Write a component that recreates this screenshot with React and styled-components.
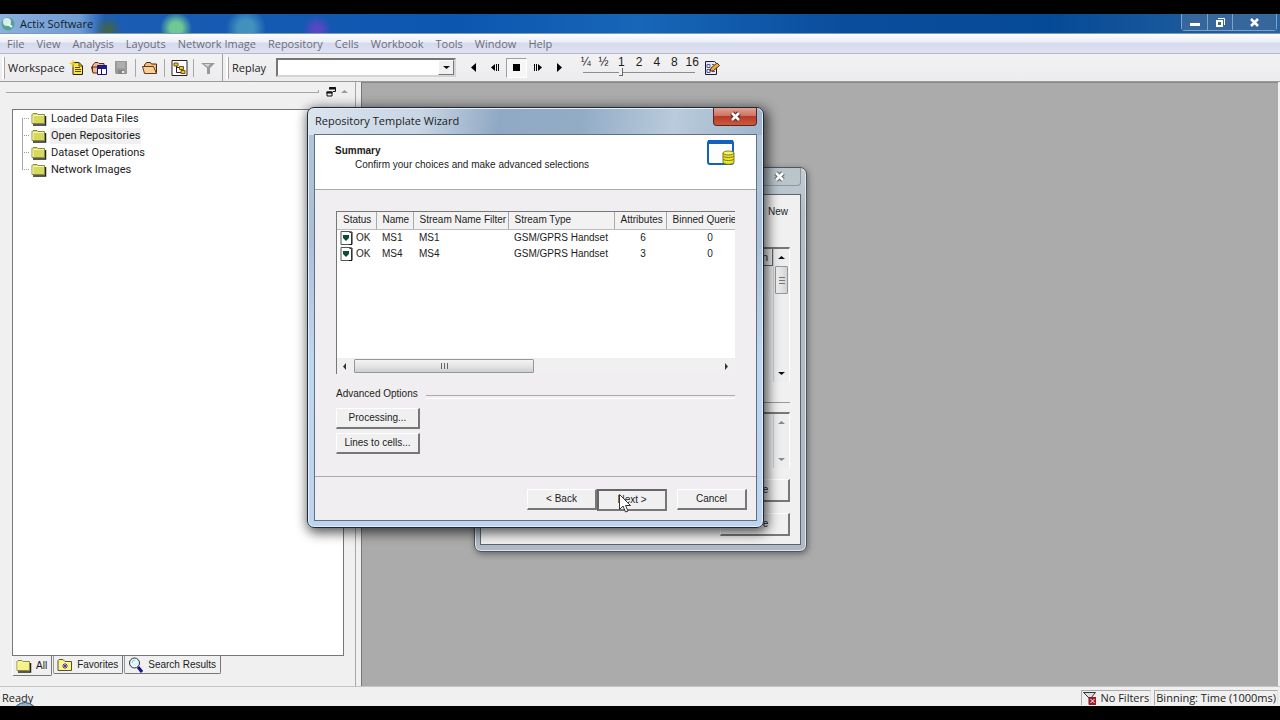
import React from 'react';
import styled, { createGlobalStyle } from 'styled-components';

const UI = '"Open Sans", "Noto Sans", sans-serif';
const CLASSIC = '"Liberation Sans", Arial, sans-serif';

const MENU = ['File', 'View', 'Analysis', 'Layouts', 'Network Image', 'Repository', 'Cells', 'Workbook', 'Tools', 'Window', 'Help'];
const TREE = ['Loaded Data Files', 'Open Repositories', 'Dataset Operations', 'Network Images'];
const SPEEDS = ['¼', '½', '1', '2', '4', '8', '16'];
const STREAMS = [
  { name: 'MS1', filter: 'MS1', type: 'GSM/GPRS Handset', attributes: 6, binned: 0 },
  { name: 'MS4', filter: 'MS4', type: 'GSM/GPRS Handset', attributes: 3, binned: 0 },
];

const Folder = ({ fill = '#d6da5c' }) => (
  <svg width="16" height="14" viewBox="0 0 16 14">
    <path d="M2 13h12.500V4" fill="none" stroke="#222" strokeWidth="1.500" />
    <path d="M1 11.500V2.500l1-1h4l1 1h6.500v9z" fill={fill} stroke="#8c8a3c" />
    <path d="M2 11V3.500h11" fill="none" stroke="#f5f5b4" />
  </svg>
);

const FavFolder = () => (
  <svg width="16" height="14" viewBox="0 0 16 14">
    <path d="M1 12.500V2.500l1-1h4l2 2h6.500v9z" fill="#fbf58c" stroke="#55532a" />
    <path d="M8 5v6M5 8h6M6 6l4 4M10 6l-4 4" stroke="#4b3a9c" />
  </svg>
);

const SearchIcon = () => (
  <svg width="16" height="16" viewBox="0 0 16 16">
    <path d="M10 10l4 5" stroke="#14148c" strokeWidth="3" />
    <circle cx="6.500" cy="6" r="5" fill="#e4f6fa" stroke="#333" />
    <path d="M4 6a3 3 0 0 1 3-3" fill="none" stroke="#7fd0dc" />
  </svg>
);

const NewIcon = () => (
  <svg width="16" height="16" viewBox="0 0 16 16">
    <path d="M4 2.500h6l3.500 3.500v8.500H4z" fill="#fbe54a" stroke="#222" />
    <path d="M10 2.500V6h3.500M6 7.500h5M6 9.500h6M6 11.500h6" fill="none" stroke="#5b4b10" />
    <path d="M4 0v7M0.500 3.500h7M2 1.500l4 4M6 1.500l-4 4" stroke="#f2c81c" />
  </svg>
);

const OpenWsIcon = () => (
  <svg width="17" height="16" viewBox="0 0 17 16">
    <path d="M1.500 12V5.500L4 2.500h3l1 1h5v3M0.500 7h6v6H2z" fill="#f6b989" stroke="#5e2b16" />
    <path d="M6.500 5.500h9v9h-9z" fill="#fff" stroke="#1c1464" />
    <path d="M6 6.500h10M7 8h9" stroke="#1c1c8c" strokeWidth="2" />
    <path d="M10.500 8v6" stroke="#1c1464" />
  </svg>
);

const SaveIcon = () => (
  <svg width="16" height="16" viewBox="0 0 16 16">
    <path d="M2 1h12v13H3l-1-1z" fill="#9a9a9a" />
    <path d="M4 2h8v6H4z" fill="#aeaeae" />
    <path d="M5 10h6v4H5z" fill="#858585" />
    <path d="M9 11h2v2H9z" fill="#eee" />
  </svg>
);

const OpenIcon = () => (
  <svg width="16" height="16" viewBox="0 0 16 16">
    <path d="M2.500 13V5l2-2.500h4l1 1.500h5v9" fill="#f3c07c" stroke="#4a2410" />
    <path d="M0.500 6.500h11l3 7H2.500z" fill="#f8d09a" stroke="#6b3714" />
  </svg>
);

const TreeIcon = () => (
  <svg width="17" height="16" viewBox="0 0 17 16">
    <path d="M1 .5h15v15H1z" fill="#fff" stroke="#222" />
    <path d="M5.500 5v7.500H10M5.500 7.500H9" fill="none" stroke="#222" />
    <path d="M3 3h4v3H3zM8.500 6.500h4v3h-4zM10 10.500h4v3h-4z" fill="#f1c232" stroke="#77500a" />
  </svg>
);

const FilterIcon = () => (
  <svg width="16" height="16" viewBox="0 0 16 16">
    <path d="M1 3h14l-5 5v6H7V8z" fill="#999" />
    <path d="M4 4h6L8 7z" fill="#d5d5d5" />
  </svg>
);

const EditIcon = () => (
  <svg width="16" height="16" viewBox="0 0 16 16">
    <path d="M1.500 1.500h9l2 2v11h-11z" fill="#e8e8f5" stroke="#1a1a3a" />
    <path d="M3 4.500h3v3H3zM3 9.500h3v3H3zM8 4.500h2M8 11.500h3" fill="none" stroke="#5858a8" />
    <path d="M6 11l1-3 6-5 2.500 2.500L9 11z" fill="#f0a92c" stroke="#53330a" />
  </svg>
);

const NoFilterIcon = () => (
  <svg width="14" height="13" viewBox="0 0 14 13">
    <path d="M.5.5h12L8 6v6.500H6V6z" fill="#ddd" stroke="#333" />
    <path d="M6 5h7v8H6z" fill="#a3182a" />
    <path d="M7.500 7l4 4M11.500 7l-4 4" stroke="#fff" />
  </svg>
);

const StreamIcon = () => (
  <svg width="13" height="14" viewBox="0 0 13 14">
    <path d="M1 .5h8.500l2 2v11H1z" fill="#fff" stroke="#555" />
    <path d="M9 1h3v12.500H9" fill="none" stroke="#111" />
    <path d="M3 4h6v3L6 10 3 7z" fill="#0c4d3a" />
  </svg>
);

const SummaryIcon = () => (
  <svg width="30" height="27" viewBox="0 0 30 27">
    <rect x="2" y="2" width="25" height="23" rx="2" fill="#fdfdff" stroke="#1461bd" strokeWidth="2" />
    <path d="M2 3h25" stroke="#1461bd" strokeWidth="4" />
    <path d="M17 14v9c0 3 11 3 11 0v-9z" fill="#e9e62c" stroke="#7a7a14" />
    <ellipse cx="22.500" cy="14" rx="5.500" ry="2" fill="#f6f36a" stroke="#7a7a14" />
    <path d="M17 17c1 2 10 2 11 0M17 20c1 2 10 2 11 0" fill="none" stroke="#7a7a14" />
  </svg>
);

const Arrow = ({ d, color = '#111' }) => (
  <svg width="9" height="9" viewBox="0 0 9 9">
    <path d={d} fill={color} />
  </svg>
);
const UP = 'M1 6h7L4.500 3z';
const DOWN = 'M1 3h7L4.500 6z';
const LEFT = 'M6 1v7L3 4.500z';
const RIGHT = 'M3 1v7l3-3.500z';

const PLAYBACK = [
  { label: 'Play backwards', d: 'M7 1v9l-5-4.500z' },
  { label: 'Step backwards', d: 'M5 2v7L1 5.500zM6 2h1v7H6zM8 2h1v7H8z' },
  { label: 'Stop', d: 'M2 2h7v7H2z', pressed: true },
  { label: 'Step forwards', d: 'M2 2h1v7H2zM4 2h1v7H4zM6 2v7l4-3.500z' },
  { label: 'Play', d: 'M4 1v9l5-4.500z' },
];

const CloseGlyph = ({ edge }) => (
  <svg width="13" height="11" viewBox="0 0 13 11">
    <path d="M3 2l7 7M10 2L3 9" stroke={edge} strokeWidth="5" />
    <path d="M3 2l7 7M10 2L3 9" stroke="#fff" strokeWidth="2.500" />
  </svg>
);

export default function App() {
  return (
    <>
      <GlobalStyle />
      <Screen>
        <AppWindow>
          <TitleBar>
            <svg width="14" height="14" viewBox="0 0 14 14">
              <circle cx="7" cy="7" r="6.500" fill="#4fa397" />
              <circle cx="6" cy="5" r="4" fill="#d4efe8" />
              <path d="M7 7l4 3" stroke="#fff" strokeWidth="2" />
            </svg>
            <AppTitle>Actix Software</AppTitle>
            <WindowButtons>
              <WindowButton aria-label="Minimize">
                <svg width="12" height="11" viewBox="0 0 12 11"><path d="M1 6h10v3H1z" fill="#fff" /></svg>
              </WindowButton>
              <WindowButton aria-label="Restore">
                <svg width="11" height="11" viewBox="0 0 11 11">
                  <path d="M3 1.500h6.500V8" fill="none" stroke="#fff" />
                  <path d="M2 4h5v5H2z" fill="none" stroke="#fff" strokeWidth="2" />
                </svg>
              </WindowButton>
              <WindowButton $wide aria-label="Close"><CloseGlyph edge="#36669c" /></WindowButton>
            </WindowButtons>
          </TitleBar>

          <MenuBar>
            {MENU.map((item) => <MenuItem key={item}>{item}</MenuItem>)}
          </MenuBar>

          <Toolbar>
            <Band $divider>
              <BandLabel as="span" $width="58px">Workspace</BandLabel>
              <ToolButton aria-label="New"><NewIcon /></ToolButton>
              <ToolButton aria-label="Open workspace"><OpenWsIcon /></ToolButton>
              <ToolButton aria-label="Save"><SaveIcon /></ToolButton>
              <Separator />
              <ToolButton aria-label="Open"><OpenIcon /></ToolButton>
              <Separator />
              <ToolButton aria-label="Tree"><TreeIcon /></ToolButton>
              <Separator />
              <ToolButton aria-label="Filter"><FilterIcon /></ToolButton>
            </Band>
            <Band>
              <BandLabel htmlFor="replay" $width="44px">Replay</BandLabel>
              <Combo>
                <select id="replay"><option></option></select>
                <ComboArrow><Arrow d={DOWN} /></ComboArrow>
              </Combo>
              <Playback>
                {PLAYBACK.map((p) => (
                  <PlayButton key={p.label} aria-label={p.label} $pressed={p.pressed}>
                    <svg width="11" height="11" viewBox="0 0 11 11"><path d={p.d} /></svg>
                  </PlayButton>
                ))}
              </Playback>
              <Speed>
                <SpeedLabels>{SPEEDS.map((s) => <span key={s}>{s}</span>)}</SpeedLabels>
                <SpeedRange type="range" min="0" max="6" defaultValue="2" aria-label="Replay speed" />
              </Speed>
              <ToolButton aria-label="Edit"><EditIcon /></ToolButton>
            </Band>
          </Toolbar>

          <Body>
            <Sidebar>
              <DockHeader>
                <DockGrip />
                <svg width="10" height="10" viewBox="0 0 10 10">
                  <path d="M3.500 1v-.5h6v4H7M1 5h5v4H1z" fill="none" stroke="#111" />
                  <path d="M3 1.500h7M.5 5.500h6" stroke="#111" strokeWidth="2" />
                </svg>
                <Arrow d={UP} color="#999" />
              </DockHeader>
              <TreePane>
                {TREE.map((label) => (
                  <TreeRow key={label}>
                    <Folder />
                    <TreeLabel $selected={label === 'Open Repositories'}>{label}</TreeLabel>
                  </TreeRow>
                ))}
              </TreePane>
              <Tabs>
                <Tab $active><Folder fill="#f8f080" />All</Tab>
                <Tab><FavFolder />Favorites</Tab>
                <Tab><SearchIcon />Search Results</Tab>
              </Tabs>
            </Sidebar>
            <Desktop />
          </Body>

          <StatusBar>
            <StatusText>Ready</StatusText>
            <StatusCell><NoFilterIcon />No Filters</StatusCell>
            <StatusCell>Binning: Time (1000ms)</StatusCell>
            <Orb />
          </StatusBar>

          <BackDialog>
            <DialogTitle>
              <DialogClose aria-label="Close"><CloseGlyph edge="#66727c" /></DialogClose>
            </DialogTitle>
            <BackContent>
              <BackHint>New</BackHint>
              <BackList $tall>
                <BackHeading>n</BackHeading>
                <BackScroll>
                  <Arrow d={UP} />
                  <BackThumb />
                  <Arrow d={DOWN} />
                </BackScroll>
              </BackList>
              <BackRule />
              <BackList>
                <BackScroll>
                  <Arrow d={UP} color="#888" />
                  <Arrow d={DOWN} color="#888" />
                </BackScroll>
              </BackList>
              <BackButtons>
                <BackButton>e</BackButton>
                <BackButton>e</BackButton>
              </BackButtons>
            </BackContent>
          </BackDialog>

          <Wizard>
            <DialogTitle>
              <span>Repository Template Wizard</span>
              <DialogClose $red aria-label="Close"><CloseGlyph edge="#6b2a22" /></DialogClose>
            </DialogTitle>
            <WizardContent>
              <WizardHeader>
                <div>
                  <WizardHeading>Summary</WizardHeading>
                  <WizardSub>Confirm your choices and make advanced selections</WizardSub>
                </div>
                <SummaryIcon />
              </WizardHeader>
              <WizardBody>
                <ListView>
                  <ListClip>
                    <StreamTable>
                      <colgroup>
                        <col width="39" /><col width="37" /><col width="95" /><col width="106" /><col width="52" /><col width="82" />
                      </colgroup>
                      <thead>
                        <tr>
                          <th>Status</th><th>Name</th><th>Stream Name Filter</th><th>Stream Type</th><th>Attributes</th><th>Binned Queries</th>
                        </tr>
                      </thead>
                      <tbody>
                        {STREAMS.map((s) => (
                          <tr key={s.name}>
                            <StatusTd><div><StreamIcon />OK</div></StatusTd>
                            <td>{s.name}</td>
                            <td>{s.filter}</td>
                            <td>{s.type}</td>
                            <NumberTd>{s.attributes}</NumberTd>
                            <NumberTd>{s.binned}</NumberTd>
                          </tr>
                        ))}
                      </tbody>
                    </StreamTable>
                  </ListClip>
                  <HScroll>
                    <Arrow d={LEFT} color="#333" />
                    <HTrack><HThumb /></HTrack>
                    <Arrow d={RIGHT} color="#333" />
                  </HScroll>
                </ListView>
                <OptionsTitle>Advanced Options</OptionsTitle>
                <OptionButtons>
                  <Button $width="84px">Processing...</Button>
                  <Button $width="84px">Lines to cells...</Button>
                </OptionButtons>
              </WizardBody>
              <WizardFooter>
                <Button $width="70px">&lt; Back</Button>
                <Button $width="70px" $isDefault>
                  Next &gt;
                  <Pointer width="12" height="19" viewBox="0 0 12 19">
                    <path d="M.5.500v15l3.500-3.500 2.500 6 2.500-1-2.500-5.500h5z" fill="#fff" stroke="#333" />
                  </Pointer>
                </Button>
                <CancelButton $width="70px">Cancel</CancelButton>
              </WizardFooter>
            </WizardContent>
          </Wizard>
        </AppWindow>
      </Screen>
    </>
  );
}

const GlobalStyle = createGlobalStyle`
  * { box-sizing: border-box; }
  body { margin: 0; background: #000; color: #1c1c1c; font: 11px/16px ${UI}; }
  button, select, input { font: inherit; color: inherit; margin: 0; padding: 0; border: none; background: none; }
  svg { display: block; flex: none; }
`;

const Screen = styled.div`
  min-height: 100vh;
  padding: 14px 0;
  display: flex;
  background: #000;
`;
const AppWindow = styled.div`
  position: relative;
  flex: 1;
  min-width: 0;
  display: flex;
  flex-direction: column;
  background: #f0f0f0;
  overflow: hidden;
`;
const TitleBar = styled.header`
  display: flex;
  align-items: center;
  height: 20px;
  padding-left: 1px;
  gap: 5px;
  border-bottom: 1px solid #7d98b8;
  background:
    radial-gradient(ellipse at 55px 10px, rgba(190, 212, 240, 0.95) 0, rgba(150, 185, 228, 0.8) 35px, transparent 62px),
    radial-gradient(circle at 108px 16px, #47643f 0, transparent 14px),
    radial-gradient(circle at 176px 14px, #6fc795 6px, transparent 16px),
    radial-gradient(circle at 246px 14px, #4290bd 8px, transparent 20px),
    radial-gradient(circle at 317px 16px, #5448c4 4px, transparent 15px),
    linear-gradient(90deg, #8db0dc 0, #6f9cd4 80px, #1c5cb4 105px, #0c56b0 36%, #1766b8 50%, #0a4d9c 66%, #054a97 82%, #2a639f 100%);
`;
const AppTitle = styled.span`
  flex: 1;
  color: #101c2c;
`;
const WindowButtons = styled.div`
  display: flex;
  align-self: flex-start;
  margin-right: 3px;
  border: 1px solid #7fa2c8;
  border-top: none;
  border-radius: 0 0 4px 4px;
`;
const WindowButton = styled.button`
  display: flex;
  align-items: center;
  justify-content: center;
  width: ${(p) => (p.$wide ? '44px' : '25px')};
  height: 16px;
  background: #36669c;
  & + & { border-left: 1px solid #7fa2c8; }
`;
const MenuBar = styled.nav`
  display: flex;
  height: 20px;
  padding-left: 7px;
  gap: 12px;
  align-items: center;
  background: linear-gradient(#fbfcfe, #eef0f8 40%, #d6daee 50%, #dfe2f2);
  border-bottom: 1px solid #b6b8c2;
`;
const MenuItem = styled.button`
  color: #6c6e78;
`;
const Toolbar = styled.div`
  display: flex;
  height: 28px;
  background: linear-gradient(#f2f2f3, #ececee);
  border-bottom: 1px solid #9b9b9b;
`;
const Band = styled.div`
  display: flex;
  align-items: center;
  margin-left: ${(p) => (p.$divider ? '2px' : '3px')};
  border-right: ${(p) => (p.$divider ? '1px solid #a0a0a0' : 'none')};
  padding-right: 3px;
  &::before {
    content: '';
    width: 2px;
    height: 22px;
    margin-right: 3px;
    background: #fff;
    border-right: 1px solid #a8a8a8;
  }
`;
const BandLabel = styled.label`
  width: ${(p) => p.$width};
`;
const ToolButton = styled.button`
  width: 22px;
  height: 22px;
  display: flex;
  align-items: center;
  justify-content: center;
`;
const Separator = styled.div`
  width: 1px;
  height: 18px;
  margin: 0 3px;
  background: #a8a8a8;
`;
const Combo = styled.div`
  display: flex;
  width: 180px;
  height: 19px;
  border: 2px solid;
  border-color: #767676 #d4d4d4 #d4d4d4 #767676;
  background: #fff;
  select {
    flex: 1;
    appearance: none;
    outline: none;
  }
`;
const ComboArrow = styled.span`
  width: 16px;
  display: flex;
  align-items: center;
  justify-content: center;
  background: #f0f0f0;
  border: 1px solid;
  border-color: #fff #777 #777 #fff;
  pointer-events: none;
`;
const Playback = styled.div`
  display: flex;
  margin-left: 8px;
`;
const PlayButton = styled.button`
  width: 21px;
  height: 20px;
  display: flex;
  align-items: center;
  justify-content: center;
  border: 1px solid;
  border-color: ${(p) => (p.$pressed ? '#a0a0a0 #fff #fff #a0a0a0' : 'transparent')};
  background: ${(p) => (p.$pressed ? '#f6f6f6' : 'none')};
`;
const Speed = styled.div`
  width: 124px;
  margin-left: 8px;
  padding-bottom: 3px;
`;
const SpeedLabels = styled.div`
  display: flex;
  line-height: 12px;
  font-family: ${CLASSIC};
  font-size: 12px;
  span { flex: 1; text-align: center; }
`;
const SpeedRange = styled.input`
  display: block;
  appearance: none;
  width: 112px;
  height: 8px;
  margin: 0 6px;
  background: linear-gradient(#8c8c8c, #8c8c8c) 0 4px / 100% 1px no-repeat;
  &::-webkit-slider-thumb {
    appearance: none;
    width: 4px;
    height: 8px;
    background: #f0f0f0;
    border-right: 1px solid #666;
    border-bottom: 1px solid #666;
  }
`;
const Body = styled.main`
  flex: 1;
  display: flex;
`;
const Sidebar = styled.aside`
  width: 356px;
  display: flex;
  flex-direction: column;
  padding: 0 11px 10px 12px;
  border-right: 1px solid #a6a6a6;
`;
const DockHeader = styled.div`
  display: flex;
  align-items: center;
  height: 19px;
  margin: 0 -5px 8px -6px;
  gap: 4px;
`;
const DockGrip = styled.div`
  flex: 1;
  height: 3px;
  margin-right: 3px;
  border-bottom: 1px solid #a6a6a6;
  border-right: 1px solid #a6a6a6;
`;
const TreePane = styled.div`
  flex: 1;
  padding-left: 9px;
  background: #fff;
  border: 1px solid #777;
`;
const TreeRow = styled.div`
  display: flex;
  align-items: center;
  height: 17px;
  gap: 3px;
  font-family: Roboto, ${UI};
  background: linear-gradient(#aaa, #aaa) 0 0 / 1px 100% no-repeat;
  &:first-child { background-position: 0 8px; }
  &:last-child { background-size: 1px 9px; }
  &::before {
    content: '';
    width: 7px;
    margin-right: -1px;
    border-top: 1px dotted #999;
  }
`;
const TreeLabel = styled.span`
  padding: 0 1px;
  background: ${(p) => (p.$selected ? '#f0f0f0' : 'none')};
`;
const Tabs = styled.div`
  display: flex;
  align-items: flex-start;
  gap: 1px;
`;
const Tab = styled.button`
  display: flex;
  align-items: center;
  gap: 4px;
  height: ${(p) => (p.$active ? '20px' : '18px')};
  padding: 0 4px 0 3px;
  font-family: ${CLASSIC};
  font-size: 10px;
  border: 1px solid #777;
  border-top: none;
  border-left-color: ${(p) => (p.$active ? '#fff' : '#999')};
  border-radius: 0 0 2px 2px;
  background: #f0f0f0;
`;
const Desktop = styled.section`
  flex: 1;
  margin: 0 2px 0 5px;
  border-left: 1px solid #777;
  border-top: 1px solid #888;
  background: #ababab;
`;
const StatusBar = styled.footer`
  position: relative;
  display: flex;
  height: 20px;
  padding: 3px 2px 0;
  gap: 3px;
  border-top: 1px solid #c4c4c4;
`;
const StatusText = styled.span`
  flex: 1;
`;
const StatusCell = styled.span`
  display: flex;
  align-items: center;
  gap: 3px;
  height: 15px;
  padding: 0 1px;
  border: 1px solid #aaa;
  border-right-color: #e0e0e0;
  border-bottom: none;
`;
const Orb = styled.div`
  position: absolute;
  left: 12px;
  top: 15px;
  width: 26px;
  height: 26px;
  border: 1px solid #34566e;
  border-radius: 50%;
  background: #8db4cd;
`;

const DialogFrame = styled.div`
  position: absolute;
  display: flex;
  flex-direction: column;
  border: 1px solid #1f2a36;
  border-radius: 7px;
`;
const BackDialog = styled(DialogFrame)`
  left: 474px;
  top: 153px;
  width: 333px;
  height: 385px;
  padding: 0 5px 6px;
  background: linear-gradient(#c3cdd3, #b3bdc7 12%, #b0bac6);
  border-color: #4c5660;
  box-shadow: inset 0 0 0 1px #dfe5e9, 1px 2px 6px rgba(0, 0, 0, 0.4);
`;
const Wizard = styled(DialogFrame)`
  left: 307px;
  top: 93px;
  width: 457px;
  height: 421px;
  padding: 0 6px 6px;
  background:
    linear-gradient(100deg, #dae4ef 0, #c8d5e3 25%, #8fa9c4 42%, #93acc6 60%, #b9cbdc 80%, #9fb5cb 100%) 0 0 / 100% 27px no-repeat,
    linear-gradient(#b4c6d8, #a9bfd6 30%, #bdd6f2 60%, #bcd4f0);
  box-shadow: inset 0 0 0 1px #e4eef8, 2px 3px 12px 2px rgba(0, 0, 0, 0.65);
`;
const DialogTitle = styled.div`
  display: flex;
  justify-content: space-between;
  align-items: center;
  height: 26px;
  padding-left: 1px;
`;
const DialogClose = styled.button`
  display: flex;
  align-items: center;
  justify-content: center;
  width: 44px;
  height: 18px;
  margin-left: auto;
  align-self: flex-start;
  border: 1px solid ${(p) => (p.$red ? '#5a2620' : '#8c98a2')};
  border-top: none;
  border-radius: 0 0 4px 4px;
  background: ${(p) => (p.$red ? 'linear-gradient(#dfa294, #cf7263 45%, #b93a26 50%, #cb5a3c)' : '#b9c4cb')};
`;
const BackContent = styled.div`
  flex: 1;
  display: flex;
  flex-direction: column;
  align-items: flex-end;
  padding: 9px 10px 0;
  background: #f0f0f0;
  border: 1px solid #5c666e;
  font-family: ${CLASSIC};
`;
const BackHint = styled.span`
  height: 43px;
  padding-right: 2px;
  font-size: 10px;
`;
const BackList = styled.div`
  display: flex;
  justify-content: flex-end;
  width: 100%;
  height: ${(p) => (p.$tall ? '135px' : '56px')};
  border-top: 2px solid #777;
  border-right: 1px solid #fff;
`;
const BackHeading = styled.span`
  width: 60px;
  height: 17px;
  padding-right: 4px;
  text-align: right;
  border-right: 1px solid #666;
  border-bottom: 1px solid #666;
`;
const BackScroll = styled.div`
  width: 16px;
  display: flex;
  flex-direction: column;
  align-items: center;
  justify-content: space-between;
  padding: 4px 0;
  background: #eceef0;
  border-left: 1px solid #d0d0d0;
`;
const BackThumb = styled.div`
  width: 13px;
  height: 28px;
  margin: 4px 0 auto;
  border: 1px solid #979797;
  border-radius: 1px;
  background: repeating-linear-gradient(#777 0 1px, transparent 1px 3px) center / 6px 7px no-repeat, linear-gradient(90deg, #f4f4f4, #cfd2d5);
`;
const BackRule = styled.div`
  width: 100%;
  height: 10px;
  margin: 20px 0 0;
  border-top: 1px solid #999;
`;
const BackButtons = styled.div`
  display: flex;
  flex-direction: column;
  gap: 11px;
  margin-top: 11px;
`;
const Button = styled.button`
  position: relative;
  width: ${(p) => p.$width};
  height: ${(p) => (p.$isDefault ? '22px' : '21px')};
  font-family: ${CLASSIC};
  font-size: 10px;
  background: #f1f0f1;
  border: ${(p) => (p.$isDefault ? '2px solid #666' : '1px solid #fff')};
  border-right: 2px solid #777;
  border-bottom: 2px solid #777;
`;
const BackButton = styled(Button)`
  width: 70px;
  height: 23px;
  padding-left: 22px;
`;
const WizardContent = styled.div`
  flex: 1;
  display: flex;
  flex-direction: column;
  background: #f0eef0;
  border: 1px solid #5f7080;
  font-family: ${CLASSIC};
  font-size: 10px;
`;
const WizardHeader = styled.div`
  display: flex;
  justify-content: space-between;
  height: 55px;
  padding: 4px 20px 0;
  background: #fff;
  border-bottom: 1px solid #aaa;
`;
const WizardHeading = styled.h1`
  margin: 5px 0 0;
  font-size: 10px;
  line-height: 14px;
`;
const WizardSub = styled.p`
  margin: 0 0 0 20px;
  line-height: 14px;
`;
const WizardBody = styled.div`
  flex: 1;
  padding: 21px 21px 0;
`;
const ListView = styled.div`
  height: 163px;
  display: flex;
  flex-direction: column;
  background: #fff;
  border: solid #777;
  border-width: 1px 0 0 1px;
`;
const ListClip = styled.div`
  flex: 1;
  overflow: hidden;
`;
const StreamTable = styled.table`
  width: 411px;
  table-layout: fixed;
  border-collapse: collapse;
  white-space: nowrap;
  th {
    height: 17px;
    padding: 0 0 0 6px;
    font-weight: normal;
    text-align: left;
    line-height: 16px;
    background: #f3f2f3;
    border-right: 1px solid #aaa;
    border-bottom: 1px solid #bbb;
  }
  td { height: 16px; padding: 0 0 0 6px; line-height: 16px; }
`;
const StatusTd = styled.td`
  div { display: flex; align-items: center; gap: 3px; margin-left: -3px; }
`;
const NumberTd = styled.td`
  text-align: center;
`;
const HScroll = styled.div`
  display: flex;
  align-items: center;
  height: 16px;
  padding: 0 4px 0 3px;
  background: #f0f0f0;
`;
const HTrack = styled.div`
  flex: 1;
  padding: 0 5px;
`;
const HThumb = styled.div`
  width: 180px;
  height: 14px;
  border: 1px solid #979797;
  border-radius: 1px;
  background: repeating-linear-gradient(90deg, #666 0 1px, transparent 1px 3px) center / 7px 6px no-repeat, linear-gradient(#f3f3f3, #e4e5e6 50%, #cdd0d2);
`;
const OptionsTitle = styled.h2`
  display: flex;
  align-items: center;
  margin: 12px 0 0;
  gap: 8px;
  font-size: 10px;
  font-weight: normal;
  line-height: 16px;
  &::after {
    content: '';
    flex: 1;
    height: 2px;
    margin-top: 6px;
    border-top: 1px solid #aaa;
    border-bottom: 1px solid #fff;
  }
`;
const OptionButtons = styled.div`
  display: flex;
  flex-direction: column;
  gap: 4px;
  margin-top: 6px;
`;
const WizardFooter = styled.div`
  display: flex;
  justify-content: flex-end;
  height: 44px;
  padding: 12px 9px 0;
  border-top: 1px solid #aaa;
`;
const CancelButton = styled(Button)`
  margin-left: 10px;
`;
const Pointer = styled.svg`
  position: absolute;
  left: 20px;
  top: 3px;
`;
